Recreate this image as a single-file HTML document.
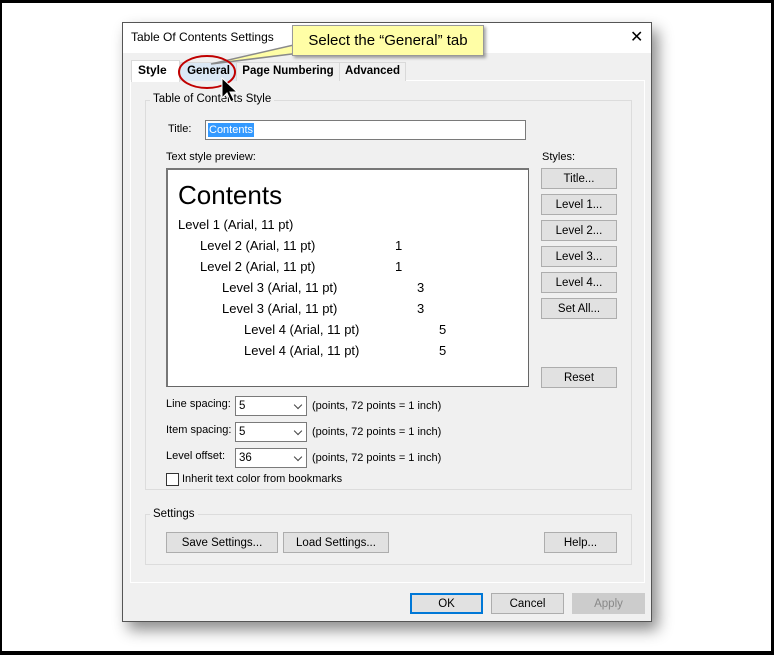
<!DOCTYPE html>
<html><head><style>
*{box-sizing:border-box;margin:0;padding:0}
body{width:774px;height:655px;background:#fff;position:relative;overflow:hidden;font-family:"Liberation Sans",Arial,sans-serif;font-size:11px;color:#000}
.a{position:absolute}
.btn{position:absolute;background:#e1e1e1;border:1px solid #adadad;text-align:center;font-size:11.5px;line-height:20px}
.grp{position:absolute;border:1px solid #dcdcdc}
.gl{position:absolute;background:#f0f0f0;padding:0 3px;font-size:11.5px;color:#000}
.cmb{position:absolute;background:#fff;border:1px solid #7a7a7a;height:20px;width:72px;font-size:11.5px;line-height:18px;padding-left:3px}
.cmb:after{content:"";position:absolute;right:5px;top:5px;width:5px;height:5px;border-right:1px solid #444;border-bottom:1px solid #444;transform:rotate(45deg)}
.pv{position:absolute;font-size:13px;white-space:nowrap}
.tab{position:absolute;top:62px;height:19px;border:1px solid #d9d9d9;border-bottom:none;background:#f0f0f0;font-weight:bold;font-size:11.5px;line-height:17px;text-align:center}
.lb{position:absolute;font-size:11px}
</style></head><body>
<div class="a" style="left:0;top:0;width:774px;height:655px;border:3px solid #000;border-left-width:2px;border-bottom-width:4px"></div>
<div class="a" style="left:122px;top:22px;width:530px;height:600px;box-shadow:6px 8px 14px rgba(0,0,0,0.45)"></div>
<div class="a" style="left:122px;top:22px;width:530px;height:600px;background:#f0f0f0;border:1px solid #555"></div>
<div class="a" style="left:123px;top:23px;width:528px;height:30px;background:#fff"></div>
<div class="a" style="left:131px;top:30px;font-size:12px">Table Of Contents Settings</div>
<div class="a" style="left:630px;top:27px;font-size:16px;font-weight:normal">✕</div>
<div class="a" style="left:130px;top:80px;width:515px;height:503px;border:1px solid #fff;background:#f0f0f0"></div>
<div class="tab" style="left:180px;width:57px;background:#dbe8f5">General</div>
<div class="tab" style="left:236px;width:104px">Page Numbering</div>
<div class="tab" style="left:339px;width:67px">Advanced</div>
<div class="a" style="left:131px;top:60px;width:49px;height:22px;background:#fff;border:1px solid #d9d9d9;border-bottom:none;font-weight:bold;font-size:12px;line-height:18px;padding-left:6px">Style</div>
<div class="grp" style="left:145px;top:100px;width:487px;height:390px"></div>
<div class="gl" style="left:150px;top:93px">Table of Contents Style</div>
<div class="lb" style="left:168px;top:123px">Title:</div>
<div class="a" style="left:205px;top:120px;width:321px;height:20px;background:#fff;border:1px solid #7a7a7a"><span style="position:absolute;left:2px;top:2px;background:#3399ff;color:#fff;font-size:11px;line-height:14px;padding:0 1px">Contents</span></div>
<div class="lb" style="left:166px;top:151px">Text style preview:</div>
<div class="lb" style="left:542px;top:151px">Styles:</div>
<div class="a" style="left:166px;top:168px;width:363px;height:219px;background:#fff;border:1px solid #666;border-top:2px solid #777;border-left:2px solid #777"></div>
<div class="pv" style="left:178px;top:180px;font-size:26px">Contents</div>
<div class="pv" style="left:178px;top:217px">Level 1 (Arial, 11 pt)</div>
<div class="pv" style="left:200px;top:238px">Level 2 (Arial, 11 pt)</div><div class="pv" style="left:395px;top:238px">1</div>
<div class="pv" style="left:200px;top:259px">Level 2 (Arial, 11 pt)</div><div class="pv" style="left:395px;top:259px">1</div>
<div class="pv" style="left:222px;top:280px">Level 3 (Arial, 11 pt)</div><div class="pv" style="left:417px;top:280px">3</div>
<div class="pv" style="left:222px;top:301px">Level 3 (Arial, 11 pt)</div><div class="pv" style="left:417px;top:301px">3</div>
<div class="pv" style="left:244px;top:322px">Level 4 (Arial, 11 pt)</div><div class="pv" style="left:439px;top:322px">5</div>
<div class="pv" style="left:244px;top:343px">Level 4 (Arial, 11 pt)</div><div class="pv" style="left:439px;top:343px">5</div>
<div class="btn" style="left:541px;top:168px;width:76px;height:21px">Title...</div>
<div class="btn" style="left:541px;top:194px;width:76px;height:21px">Level 1...</div>
<div class="btn" style="left:541px;top:220px;width:76px;height:21px">Level 2...</div>
<div class="btn" style="left:541px;top:246px;width:76px;height:21px">Level 3...</div>
<div class="btn" style="left:541px;top:272px;width:76px;height:21px">Level 4...</div>
<div class="btn" style="left:541px;top:298px;width:76px;height:21px">Set All...</div>
<div class="btn" style="left:541px;top:367px;width:76px;height:21px">Reset</div>
<div class="lb" style="left:166px;top:398px">Line spacing:</div>
<div class="cmb" style="left:235px;top:396px">5</div>
<div class="lb" style="left:312px;top:400px">(points, 72 points = 1 inch)</div>
<div class="lb" style="left:166px;top:424px">Item spacing:</div>
<div class="cmb" style="left:235px;top:422px">5</div>
<div class="lb" style="left:312px;top:426px">(points, 72 points = 1 inch)</div>
<div class="lb" style="left:166px;top:450px">Level offset:</div>
<div class="cmb" style="left:235px;top:448px">36</div>
<div class="lb" style="left:312px;top:452px">(points, 72 points = 1 inch)</div>
<div class="a" style="left:166px;top:473px;width:13px;height:13px;background:#fff;border:1px solid #333"></div>
<div class="lb" style="left:182px;top:473px">Inherit text color from bookmarks</div>
<div class="grp" style="left:145px;top:514px;width:487px;height:51px"></div>
<div class="gl" style="left:150px;top:508px">Settings</div>
<div class="btn" style="left:166px;top:532px;width:112px;height:21px">Save Settings...</div>
<div class="btn" style="left:283px;top:532px;width:106px;height:21px">Load Settings...</div>
<div class="btn" style="left:544px;top:532px;width:73px;height:21px">Help...</div>
<div class="btn" style="left:410px;top:593px;width:73px;height:21px;border:2px solid #0078d7;line-height:18px">OK</div>
<div class="btn" style="left:491px;top:593px;width:73px;height:21px">Cancel</div>
<div class="btn" style="left:572px;top:593px;width:73px;height:21px;border-color:#ccc;background:#ccc;color:#888">Apply</div>
<svg class="a" style="left:0;top:0" width="774" height="655">
<polygon points="211,64 298,44 300,53" fill="#fffea6" stroke="#8a8a8a" stroke-width="1.5"/>
<ellipse cx="207" cy="72" rx="28" ry="16" fill="none" stroke="#c00000" stroke-width="2"/>
<path d="M222,78 L222,98 L227,93 L231,102 L234,100 L230,92 L237,92 Z" fill="#000" stroke="#fff" stroke-width="1"/>
</svg>
<div class="a" style="left:292px;top:25px;width:192px;height:31px;background:#fffea6;border:1px solid #999;box-shadow:2px 2px 3px rgba(0,0,0,0.35);font-size:15px;line-height:29px;text-align:center">Select the “General” tab</div>
</body></html>
